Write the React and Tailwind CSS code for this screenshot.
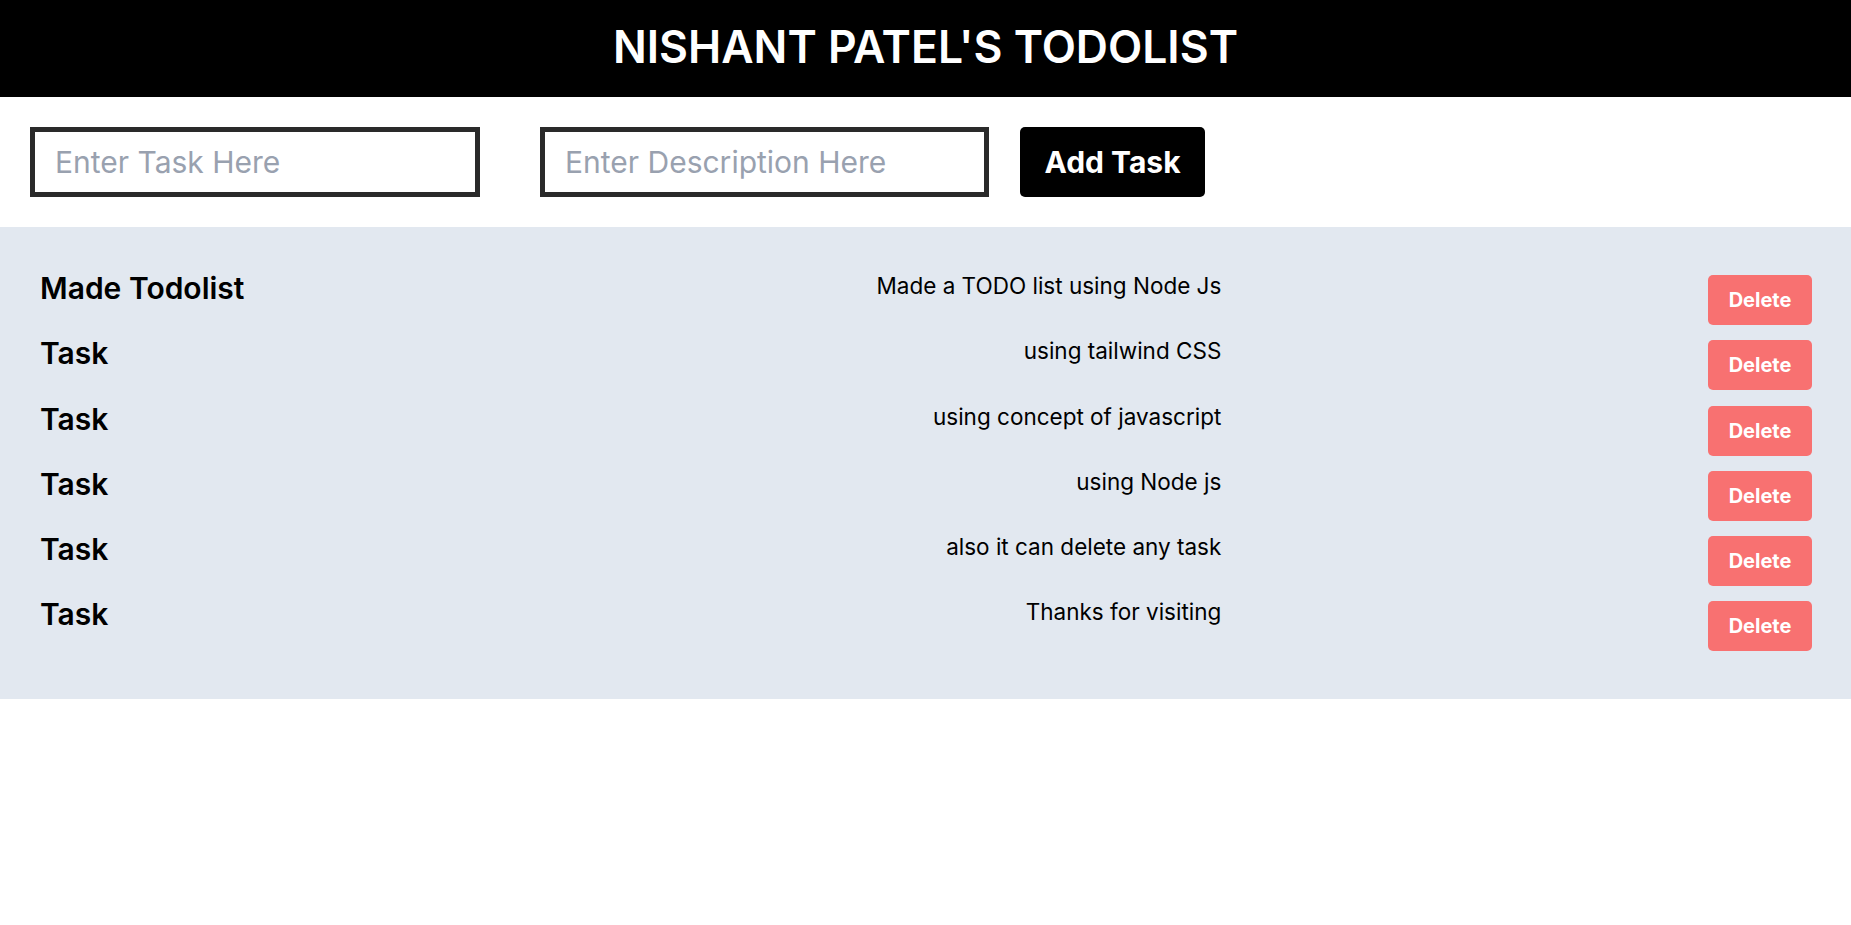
import React from "react";

const tasks = [
  { title: "Made Todolist", desc: "Made a TODO list using Node Js" },
  { title: "Task", desc: "using tailwind CSS" },
  { title: "Task", desc: "using concept of javascript" },
  { title: "Task", desc: "using Node js" },
  { title: "Task", desc: "also it can delete any task" },
  { title: "Task", desc: "Thanks for visiting" },
];

export default function App() {
  return (
    <div className="min-h-screen bg-white text-black" style={{ fontFamily: "Inter, 'Noto Sans', sans-serif" }}>
      <header className="h-[97px] bg-black flex items-center justify-center pb-[3px]">
        <h1 className="text-white text-[44.5px] leading-[50px] font-semibold">NISHANT PATEL'S TODOLIST</h1>
      </header>

      <form className="flex items-center px-[30px] py-[30px]" onSubmit={(e) => e.preventDefault()}>
        <input
          type="text"
          placeholder="Enter Task Here"
          className="w-[450px] h-[70px] border-[5px] border-[#2a2a2a] px-[20px] text-[30px] outline-none placeholder:text-gray-400"
        />
        <input
          type="text"
          placeholder="Enter Description Here"
          className="ml-[60px] w-[449px] h-[70px] border-[5px] border-[#2a2a2a] px-[20px] text-[30px] outline-none placeholder:text-gray-400"
        />
        <button className="ml-[31px] w-[185px] h-[70px] bg-black text-white rounded-[5px] text-[30px] font-bold">
          Add Task
        </button>
      </form>

      <section className="bg-[#e2e8f0] pl-[40px] pr-[39px] pt-[41px] pb-[39px]">
        {tasks.map((t, i) => (
          <div key={i} className="flex justify-between items-start h-[65.3px]">
            <div className="w-2/3 flex justify-between items-start">
              <h5 className="text-[30px] leading-[40px] font-semibold">{t.title}</h5>
              <h6 className="text-[22.5px] leading-[35px] font-normal text-right">{t.desc}</h6>
            </div>
            <button className="mt-[7px] w-[104px] h-[50px] bg-[#f87171] text-white rounded-[5px] text-[20px] font-bold">
              Delete
            </button>
          </div>
        ))}
      </section>
    </div>
  );
}
